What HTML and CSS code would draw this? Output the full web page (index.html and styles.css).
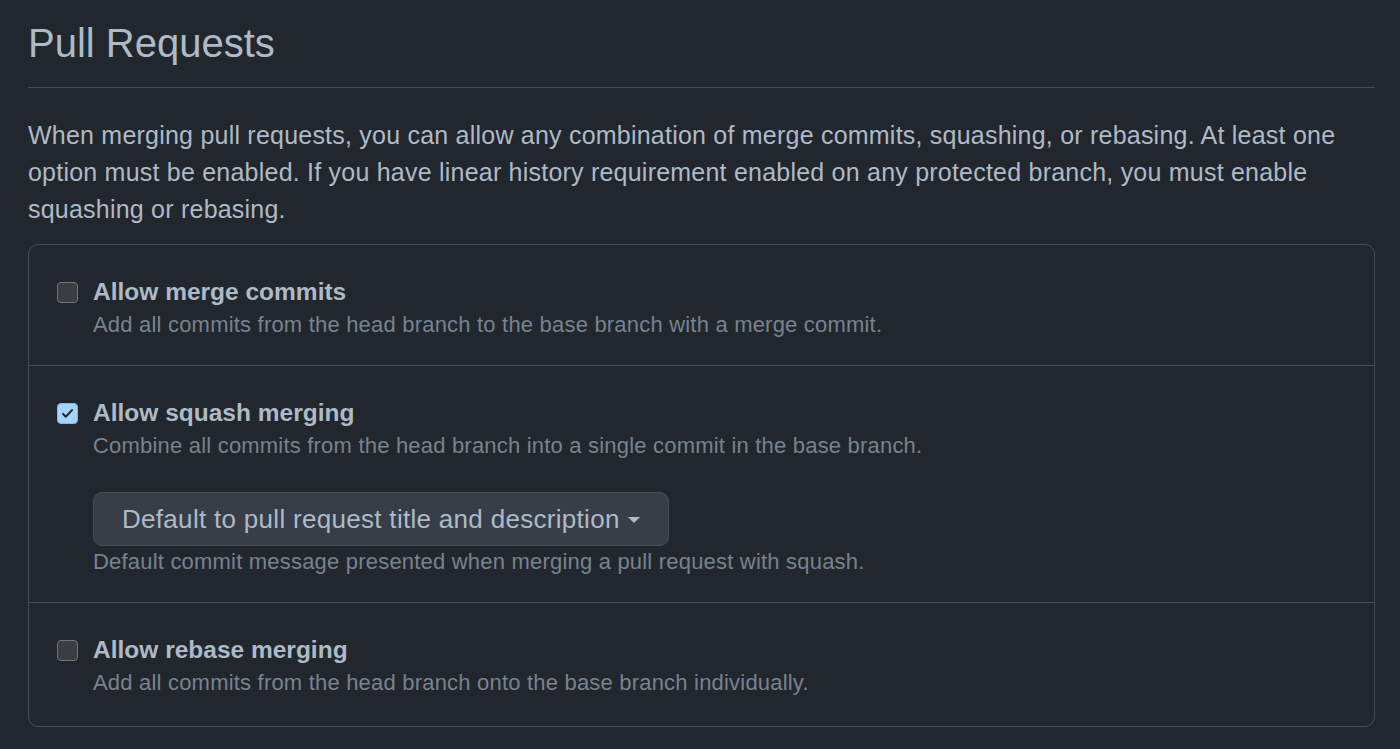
FILE: index.html
```html
<!DOCTYPE html>
<html lang="en">
<head>
  <meta charset="UTF-8" />
  <title>Pull Requests</title>
  <link rel="stylesheet" href="styles.css">
</head>
<body>
  <div class="settings">
    <h2 class="section-title">Pull Requests</h2>
    <p class="section-note">When merging pull requests, you can allow any combination of merge commits, squashing, or rebasing. At least one option must be enabled. If you have linear history requirement enabled on any protected branch, you must enable squashing or rebasing.</p>

    <div class="box">
      <div class="box-row">
        <label class="option">
          <span class="checkbox"></span>
          <span class="option-body">
            <span class="option-label">Allow merge commits</span>
            <span class="option-note">Add all commits from the head branch to the base branch with a merge commit.</span>
          </span>
        </label>
      </div>

      <div class="box-row">
        <label class="option">
          <span class="checkbox checked">
            <svg viewBox="0 0 16 16" width="15" height="15"><path d="M3.2 8.4l3 3 6.6-7" fill="none" stroke="#22272e" stroke-width="2.2" stroke-linecap="round" stroke-linejoin="round"/></svg>
          </span>
          <span class="option-body">
            <span class="option-label">Allow squash merging</span>
            <span class="option-note">Combine all commits from the head branch into a single commit in the base branch.</span>
          </span>
        </label>
        <div class="sub-setting">
          <button class="select-btn">Default to pull request title and description <span class="caret"></span></button>
          <span class="option-note">Default commit message presented when merging a pull request with squash.</span>
        </div>
      </div>

      <div class="box-row">
        <label class="option">
          <span class="checkbox"></span>
          <span class="option-body">
            <span class="option-label">Allow rebase merging</span>
            <span class="option-note">Add all commits from the head branch onto the base branch individually.</span>
          </span>
        </label>
      </div>
    </div>
  </div>
</body>
</html>
```

FILE: styles.css
```css
html, body {
  margin: 0;
  padding: 0;
  height: 100%;
  overflow: hidden;
  background: #22272e;
  color: #adbac7;
  font-family: "Liberation Sans", Arial, sans-serif;
}

.settings {
  padding: 0 25px 0 28px;
}

.section-title {
  margin: 0;
  padding: 18px 0 19px;
  font-size: 40px;
  line-height: 50px;
  font-weight: 400;
  border-bottom: 1px solid #444c56;
}

.section-note {
  margin: 29px 0 16px;
  font-size: 25px;
  line-height: 37px;
  letter-spacing: 0.22px;
}

.box {
  border: 1px solid #444c56;
  border-radius: 10px;
}

.box-row {
  padding: 30px 28px 24px;
}

.box-row:last-child {
  padding-bottom: 27px;
}

.box-row + .box-row {
  border-top: 1px solid #444c56;
}

.option {
  display: flex;
  gap: 15px;
  align-items: flex-start;
}

.checkbox {
  flex: none;
  width: 19px;
  height: 19px;
  margin-top: 7px;
  border: 1px solid #6e7681;
  border-radius: 4px;
  background: #3b3d41;
  display: flex;
  align-items: center;
  justify-content: center;
}

.checkbox.checked {
  background: #a5d3fc;
  border-color: #7ab8f0;
}

.option-body {
  display: flex;
  flex-direction: column;
}

.option-label {
  font-size: 24.5px;
  line-height: 34px;
  font-weight: 700;
}

.option-note {
  display: block;
  font-size: 22px;
  line-height: 32px;
  letter-spacing: 0.2px;
  color: #768390;
}

.sub-setting {
  margin: 30px 0 0 36px;
}

.select-btn {
  display: inline-flex;
  align-items: center;
  gap: 8px;
  height: 54px;
  padding: 0 28px;
  background: #373e47;
  border: 1px solid #444c56;
  border-radius: 9px;
  color: #adbac7;
  font-family: inherit;
  font-size: 26px;
  letter-spacing: 0.3px;
  font-weight: 500;
}

.caret {
  width: 0;
  height: 0;
  border-left: 6px solid transparent;
  border-right: 6px solid transparent;
  border-top: 6px solid #adbac7;
  margin-top: 2px;
}
```
